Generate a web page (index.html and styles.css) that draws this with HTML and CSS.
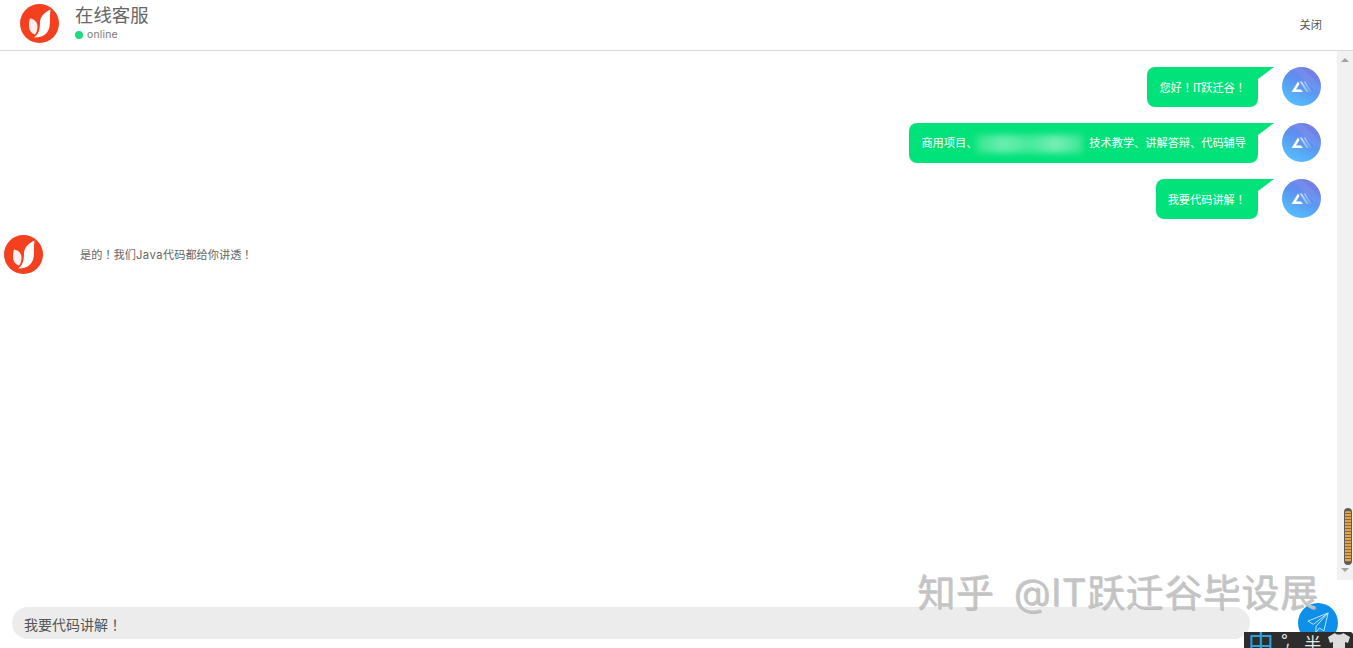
FILE: index.html
```html
<!DOCTYPE html>
<html lang="zh-CN">
<head>
    <meta charset="UTF-8">
    <meta name="viewport" content="width=device-width, initial-scale=1.0">
    <title>在线客服</title>
    <link rel="stylesheet" href="styles.css">
</head>
<body>
    <svg class="icon-defs" width="0" height="0" aria-hidden="true">
        <defs>
            <linearGradient id="user-bg" x1="0.75" y1="0" x2="0.25" y2="1">
                <stop offset="0" stop-color="#7a78e6"/>
                <stop offset="0.45" stop-color="#5b93f0"/>
                <stop offset="1" stop-color="#55c2ff"/>
            </linearGradient>
            <linearGradient id="user-fade" x1="0" y1="0" x2="1" y2="0">
                <stop offset="0" stop-color="#fff" stop-opacity="0.75"/>
                <stop offset="1" stop-color="#fff" stop-opacity="0.05"/>
            </linearGradient>
            <symbol id="logo" viewBox="0 0 39 39">
                <circle cx="19.500" cy="19.500" r="19.500" fill="#f4401f"/>
                <path d="M30.500 5.500C25 8 20.500 12 20 18c-.2 6 0 11-6 15.500 8 .5 14-3.500 15.500-10.500 1-6 0-12 1-17.500z" fill="#fff"/>
                <path d="M10 14.500c4 .5 7.500 3.500 7.500 8 0 3.500-1 6.500-2.500 8-3.500-1-6-4-6-9 0-2.500.3-5 1-7z" fill="#fff" opacity="0.92"/>
            </symbol>
            <symbol id="user" viewBox="0 0 39 39">
                <circle cx="19.500" cy="19.500" r="19.500" fill="url(#user-bg)"/>
                <path d="M19.500 0 39 19.500V30L9 0z" fill="#fff" opacity="0.06"/>
                <path d="M16 14.500 9.500 25H21l-2-2.500h-5l3.500-5.500z" fill="#fff"/>
                <path d="M17.500 14.500H20L27 25h-2.500zM21.500 14.500h2L30 25h-2z" fill="url(#user-fade)"/>
            </symbol>
        </defs>
    </svg>

    <header class="chat-header">
        <svg class="avatar"><use href="#logo"/></svg>
        <div class="header-info">
            <div class="header-title">在线客服</div>
            <div class="header-status"><span class="status-dot"></span>online</div>
        </div>
        <a class="header-close">关闭</a>
    </header>

    <div class="chat-body">
        <main class="messages">
            <div class="msg msg-user">
                <div class="bubble">您好<span class="bang" lang="zh-TW">！</span><span class="latin-narrow">IT</span>跃迁谷<span class="bang" lang="zh-TW">！</span></div>
                <svg class="avatar"><use href="#user"/></svg>
            </div>
            <div class="msg msg-user">
                <div class="bubble">商用项目、<span class="blurred"></span>技术教学、讲解答辩、代码辅导</div>
                <svg class="avatar"><use href="#user"/></svg>
            </div>
            <div class="msg msg-user">
                <div class="bubble">我要代码讲解<span class="bang" lang="zh-TW">！</span></div>
                <svg class="avatar"><use href="#user"/></svg>
            </div>
            <div class="msg msg-bot">
                <svg class="avatar"><use href="#logo"/></svg>
                <div class="bot-text">是的<span class="bang" lang="zh-TW">！</span>我们<span class="latin-wide">Java</span>代码都给你讲透<span class="bang" lang="zh-TW">！</span></div>
            </div>
        </main>
        <div class="scrollbar">
            <span class="arrow arrow-up"></span>
            <div class="scroll-track"><div class="scroll-thumb"></div></div>
            <span class="arrow arrow-down"></span>
        </div>
    </div>

    <footer class="chat-footer">
        <div class="chat-input">我要代码讲解<span class="bang" lang="zh-TW">！</span></div>
        <button class="send-btn" type="button" aria-label="发送">
            <svg width="22" height="22" viewBox="0 0 24 24" fill="none" stroke="#cfeaff" stroke-width="1" stroke-linejoin="round">
                <path d="M23 1 1 10l6 3.500L23 1 10 15.500l-.5 7 4-5 5 3z"/>
            </svg>
        </button>
    </footer>

    <div class="watermark">知乎 @IT跃迁谷毕设展</div>

    <div class="ime-bar">
        <span class="ime-cn">中</span>
        <span class="ime-dot">°,</span>
        <span class="ime-half">半</span>
        <svg class="ime-shirt" width="22" height="16" viewBox="0 0 22 16"><path d="M7 0 0 4l2 6 3-1v7h12V9l3 1 2-6-7-4c-1 2-7 2-8 0z" fill="#ddd"/></svg>
    </div>
</body>
</html>
```

FILE: styles.css
```css
* {
    box-sizing: border-box;
}

html, body {
    height: 100%;
}

body {
    margin: 0;
    display: flex;
    flex-direction: column;
    overflow: hidden;
    background-color: #fff;
    color: #555;
    font-family: "Inter", "Noto Sans CJK SC", sans-serif;
}

.icon-defs {
    position: absolute;
}

.avatar {
    display: block;
    flex: none;
    width: 39px;
    height: 39px;
}

/* centered fullwidth exclamation mark */
.bang {
    font-family: "Noto Sans CJK TC", sans-serif;
}

.latin-narrow {
    letter-spacing: -1px;
}

.latin-wide {
    letter-spacing: 0.5px;
}

/* header */
.chat-header {
    display: flex;
    flex: none;
    align-items: center;
    height: 51px;
    padding: 0 31px 3px 20px;
    border-bottom: 1px solid #d9d9d9;
}

.header-info {
    flex: 1;
    margin: -2px 0 0 16px;
}

.header-title {
    font-size: 18.400px;
    line-height: 24px;
    color: #666;
}

.header-status {
    display: flex;
    align-items: center;
    margin-top: 1px;
    font-size: 10.400px;
    line-height: 14px;
    letter-spacing: 0.2px;
    color: #777;
}

.status-dot {
    width: 8px;
    height: 8px;
    margin-right: 4px;
    border-radius: 50%;
    background-color: #1bdc7e;
}

.header-close {
    font-size: 11.200px;
    color: #555;
}

/* messages */
.chat-body {
    display: flex;
    flex: none;
    height: 529px;
}

.messages {
    flex: 1;
    padding-top: 16px;
}

.msg {
    display: flex;
    margin-bottom: 16px;
}

.msg-user {
    justify-content: flex-end;
    padding-right: 16px;
}

.msg-bot {
    padding-left: 4px;
}

.bubble {
    position: relative;
    height: 40px;
    margin-right: 24px;
    padding: 0 12px;
    border-radius: 8px 0 8px 8px;
    background-color: #02e27a;
    color: #fff;
    font-size: 11.200px;
    line-height: 40px;
    white-space: nowrap;
}

.bubble::after {
    content: "";
    position: absolute;
    top: 0;
    left: 100%;
    border-top: 12px solid #02e27a;
    border-right: 16px solid transparent;
}

.blurred {
    display: inline-block;
    width: 107px;
    height: 18px;
    margin: 0 6px 0 -1px;
    vertical-align: middle;
    background: linear-gradient(90deg, #2fe690, #6ceeb0 25%, #45e99b 50%, #74efb5 75%, #35e794);
    filter: blur(3px);
}

.bot-text {
    margin: 10px 0 0 37px;
    font-size: 11.200px;
    line-height: 18px;
    color: #666;
}

/* scrollbar */
.scrollbar {
    display: flex;
    flex: none;
    flex-direction: column;
    align-items: center;
    width: 16px;
    padding: 7px 0 8px;
    background-color: #f1f1f1;
}

.arrow {
    flex: none;
    border-left: 4px solid transparent;
    border-right: 4px solid transparent;
}

.arrow-up {
    border-bottom: 4px solid #a3a3a3;
}

.arrow-down {
    border-top: 4px solid #a3a3a3;
}

.scroll-track {
    display: flex;
    flex: 1;
    align-items: flex-end;
    align-self: flex-end;
    margin: 0 1px 3px 0;
}

.scroll-thumb {
    width: 8px;
    height: 57px;
    border: 1px solid #5c5c5c;
    border-width: 3px 1px;
    border-radius: 4px;
    background: repeating-linear-gradient(#e0a24a 0, #e0a24a 2px, #8a6a3a 2px, #8a6a3a 3px);
}

/* footer */
.chat-footer {
    display: flex;
    flex: 1;
    align-items: flex-start;
    padding: 27px 15px 0 12px;
}

.chat-input {
    flex: 1;
    height: 32px;
    padding: 8px 12px 0;
    border-radius: 16px;
    background-color: #ececec;
    font-size: 14px;
    line-height: 18px;
    color: #555;
}

.send-btn {
    flex: none;
    display: flex;
    align-items: center;
    justify-content: center;
    width: 40px;
    height: 40px;
    margin: -4px 0 0 48px;
    padding: 0;
    border: none;
    border-radius: 50%;
    background-color: #0e90ea;
}

/* overlays */
.watermark {
    position: absolute;
    left: 917px;
    top: 569px;
    font-size: 38px;
    line-height: 46px;
    letter-spacing: 0.600px;
    word-spacing: 8px;
    white-space: nowrap;
    color: rgba(195, 195, 195, 0.85);
    text-shadow: 1px 1px 0 rgba(130, 130, 130, 0.45), -1px -1px 0 rgba(255, 255, 255, 0.6);
}

.ime-bar {
    position: absolute;
    left: 1244px;
    top: 632px;
    display: flex;
    align-items: flex-start;
    width: 109px;
    height: 16px;
    overflow: hidden;
    border-top-right-radius: 3px;
    background-color: #2d2d2d;
    color: #e8e8e8;
}

.ime-cn {
    margin: -3px 0 0 4px;
    font-size: 26px;
    line-height: 30px;
    color: #2a9fd8;
}

.ime-dot {
    margin: -3px 0 0 7px;
    font-size: 15px;
    line-height: 22px;
}

.ime-half {
    margin: 0 0 0 14px;
    font-size: 17px;
    line-height: 24px;
}

.ime-shirt {
    margin: 1px 0 0 7px;
}
```
